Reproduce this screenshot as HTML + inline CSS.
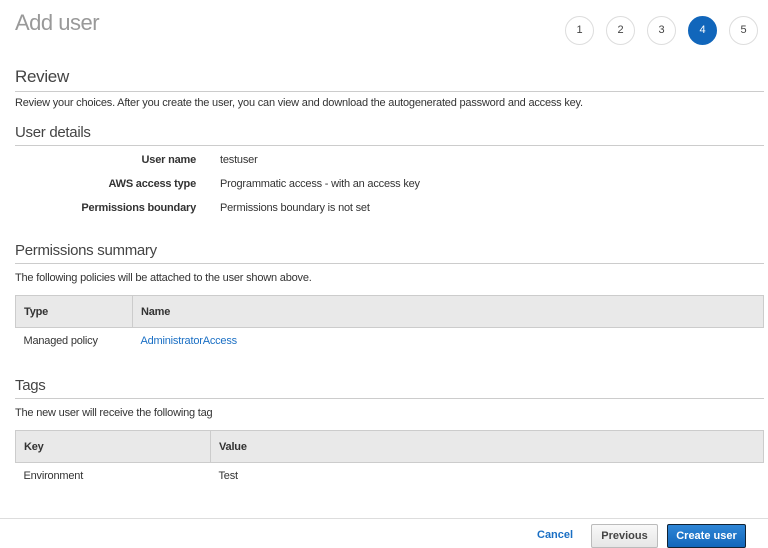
<!DOCTYPE html>
<html><head><style>
body{margin:0;width:768px;height:548px;background:#fff;font-family:"Liberation Sans",sans-serif;color:#333;position:relative;overflow:hidden}
.a{position:absolute;white-space:nowrap}
.h{font-size:15px;color:#444;letter-spacing:-0.3px}
.ln{position:absolute;left:15px;right:4px;height:1px;background:#ccc}
.s{font-size:11px;letter-spacing:-0.2px}
.c{position:absolute;top:16px;width:27px;height:27px;border:1px solid #ddd;border-radius:50%;text-align:center;line-height:27px;font-size:11px;color:#444}
table{position:absolute;left:15px;width:749px;border-collapse:collapse;font-size:11px;letter-spacing:-0.2px}
th{background:#e9e9e9;border:1px solid #ccc;text-align:left;height:31px;padding:0 8px;font-weight:bold;color:#333}
td{height:26px;padding:0 8px;color:#333}
.b{position:absolute;top:524px;height:22px;border-radius:2px;font-size:11px;font-weight:bold;text-align:center;line-height:22px}
</style></head><body>
<div class="a" style="left:15px;top:10px;font-size:22px;color:#999;letter-spacing:-0.5px">Add user</div>
<div class="c" style="left:565px">1</div>
<div class="c" style="left:606px">2</div>
<div class="c" style="left:647px">3</div>
<div class="c" style="left:688px;background:#1166bb;border-color:#1166bb;color:#fff">4</div>
<div class="c" style="left:729px">5</div>
<div class="a" style="left:15px;top:67px;font-size:17px;color:#444;letter-spacing:-0.3px">Review</div>
<div class="ln" style="top:91px"></div>
<div class="a s" style="left:15px;top:97px">Review your choices. After you create the user, you can view and download the autogenerated password and access key.</div>
<div class="a h" style="left:15px;top:124px">User details</div>
<div class="ln" style="top:145px"></div>
<div class="a s" style="right:572px;top:154px;font-weight:bold">User name</div>
<div class="a s" style="left:220px;top:154px">testuser</div>
<div class="a s" style="right:572px;top:178px;font-weight:bold">AWS access type</div>
<div class="a s" style="left:220px;top:178px">Programmatic access - with an access key</div>
<div class="a s" style="right:572px;top:202px;font-weight:bold">Permissions boundary</div>
<div class="a s" style="left:220px;top:202px">Permissions boundary is not set</div>
<div class="a h" style="left:15px;top:242px">Permissions summary</div>
<div class="ln" style="top:263px"></div>
<div class="a s" style="left:15px;top:272px">The following policies will be attached to the user shown above.</div>
<table style="top:295px"><tr><th style="width:100px">Type</th><th>Name</th></tr>
<tr><td>Managed policy</td><td style="color:#1a6fc4">AdministratorAccess</td></tr></table>
<div class="a h" style="left:15px;top:377px">Tags</div>
<div class="ln" style="top:398px"></div>
<div class="a s" style="left:15px;top:407px">The new user will receive the following tag</div>
<table style="top:430px"><tr><th style="width:178px">Key</th><th>Value</th></tr>
<tr><td>Environment</td><td>Test</td></tr></table>
<div style="position:absolute;left:0;right:0;top:518px;height:1px;background:#ddd"></div>
<div class="a" style="left:537px;top:529px;font-size:11px;font-weight:bold;color:#1a6fc4">Cancel</div>
<div class="b" style="left:591px;width:65px;border:1px solid #bbb;background:linear-gradient(#f8f8f8,#e6e6e6);color:#444">Previous</div>
<div class="b" style="left:667px;width:77px;border:1px solid #123;background:linear-gradient(#2f86d6,#1166bb);color:#fff">Create user</div>
</body></html>
